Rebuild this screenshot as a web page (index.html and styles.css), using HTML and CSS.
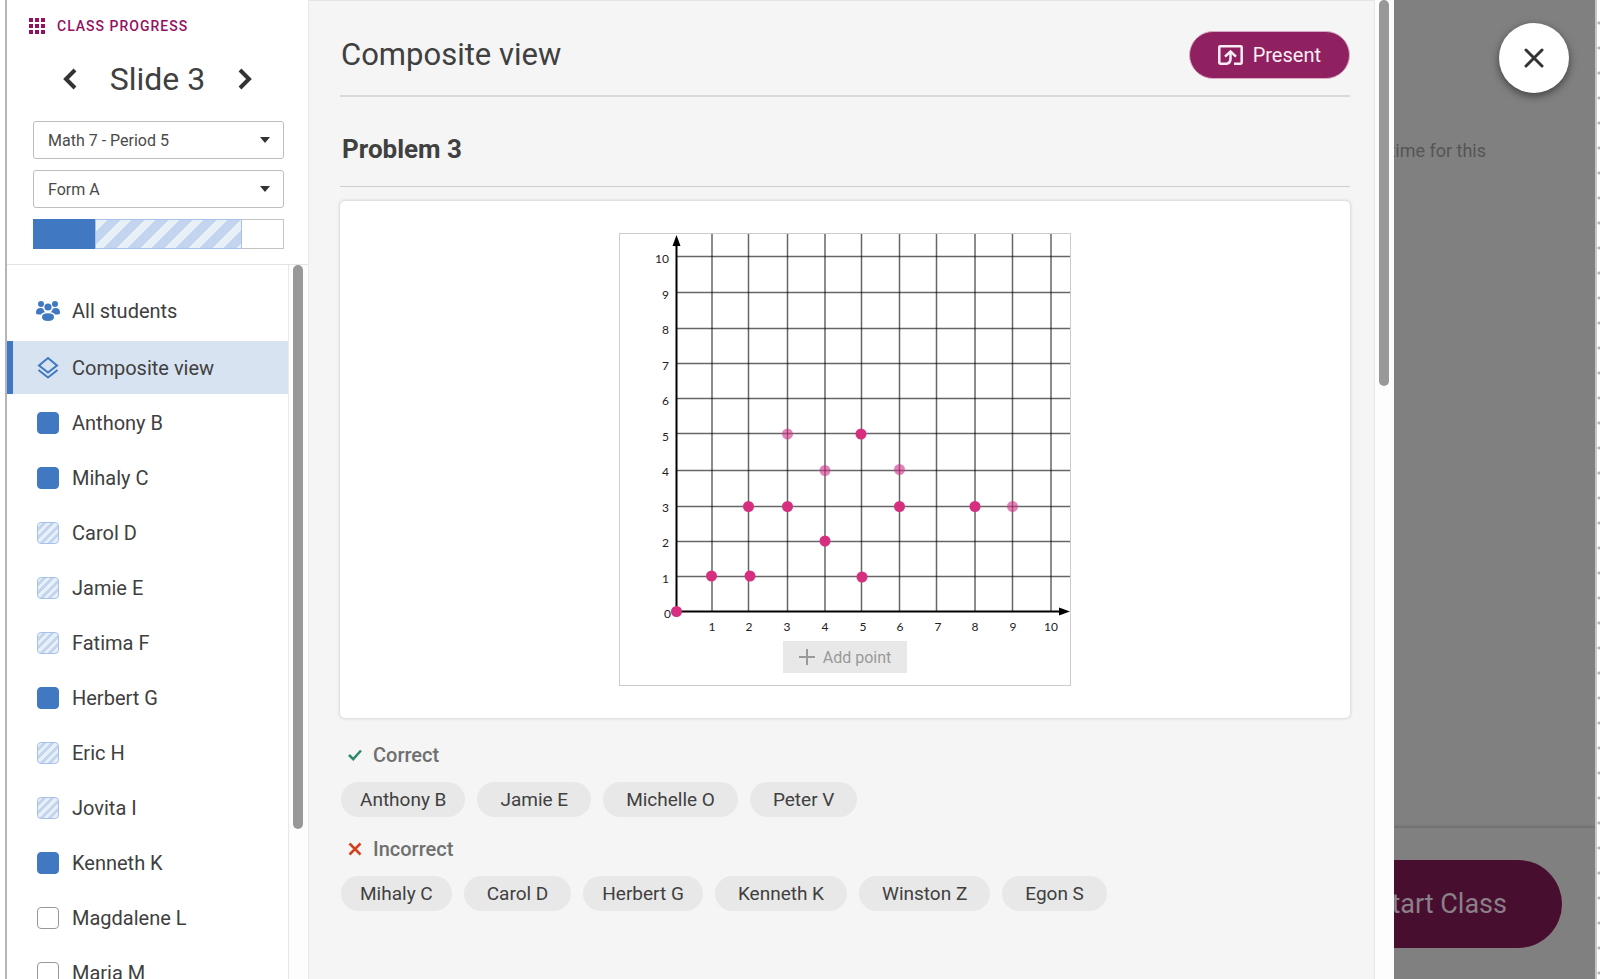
FILE: index.html
```html
<!DOCTYPE html>
<html lang="en">
<head>
<meta charset="utf-8">
<title>Class progress - Slide 3</title>
<link rel="stylesheet" href="styles.css">
</head>
<body>
<div class="app">
  <aside class="sidebar">
    <div class="sidebar-head">
      <a class="progress-link" href="#progress">
        <svg width="16" height="16" viewBox="0 0 16 16" fill="currentColor" aria-hidden="true">
          <path d="M0 0h4v4H0zM6 0h4v4H6zM12 0h4v4h-4zM0 6h4v4H0zM6 6h4v4H6zM12 6h4v4h-4zM0 12h4v4H0zM6 12h4v4H6zM12 12h4v4h-4z"/>
        </svg>
        <span>CLASS PROGRESS</span>
      </a>
      <div class="slide-nav">
        <button class="nav-btn" type="button" aria-label="Previous slide">
          <svg width="14" height="22" viewBox="0 0 14 22" fill="none" stroke="currentColor" stroke-width="4"><path d="M12 2L3 11l9 9"/></svg>
        </button>
        <h2 class="slide-title">Slide 3</h2>
        <button class="nav-btn" type="button" aria-label="Next slide">
          <svg width="14" height="22" viewBox="0 0 14 22" fill="none" stroke="currentColor" stroke-width="4"><path d="M2 2l9 9-9 9"/></svg>
        </button>
      </div>
      <div class="picker"><select aria-label="Class"><option>Math 7 - Period 5</option></select></div>
      <div class="picker"><select aria-label="Form"><option>Form A</option></select></div>
      <div class="meter">
        <div class="meter-done"></div>
        <div class="meter-partial stripes-wide"></div>
      </div>
    </div>
    <div class="sidebar-body">
      <nav class="students" aria-label="Students">
        <a class="student" href="#all">
          <svg class="glyph" width="24" height="22" viewBox="0 0 24 22" fill="#4178c2" aria-hidden="true">
            <circle cx="5" cy="4" r="3"/><circle cx="19" cy="4" r="3"/><circle cx="12" cy="7" r="3.6"/>
            <path d="M0 12.500c0-3 1.500-4.500 4-4.500 1.300 0 2.500.200 3.300.800.200 1.600 1 2.700 2 3.400-2 .200-3.600 1-4.300 2.300H2c-1.500 0-2-.700-2-2z"/>
            <path d="M24 12.500c0-3-1.500-4.500-4-4.500-1.300 0-2.500.200-3.300.800-.200 1.600-1 2.700-2 3.400 2 .200 3.600 1 4.300 2.300h3c1.500 0 2-.700 2-2z"/>
            <path d="M6 17c0-2.700 2-3.800 6-3.800s6 1.100 6 3.800c0 2.600-2 4-6 4s-6-1.400-6-4z"/>
          </svg>
          <span>All students</span>
        </a>
        <a class="student student-active" href="#composite" aria-current="page">
          <svg class="glyph" width="24" height="24" viewBox="0 0 24 24" fill="none" stroke="#4178c2" stroke-width="2" aria-hidden="true">
            <path d="M12 2l9 7.500-9 7-9-7z"/><path d="M2.500 14l9.500 7.500L21.500 14"/>
          </svg>
          <span>Composite view</span>
        </a>
        <a class="student" href="#s1"><i class="swatch done"></i><span>Anthony B</span></a>
        <a class="student" href="#s2"><i class="swatch done"></i><span>Mihaly C</span></a>
        <a class="student" href="#s3"><i class="swatch partial"></i><span>Carol D</span></a>
        <a class="student" href="#s4"><i class="swatch partial"></i><span>Jamie E</span></a>
        <a class="student" href="#s5"><i class="swatch partial"></i><span>Fatima F</span></a>
        <a class="student" href="#s6"><i class="swatch done"></i><span>Herbert G</span></a>
        <a class="student" href="#s7"><i class="swatch partial"></i><span>Eric H</span></a>
        <a class="student" href="#s8"><i class="swatch partial"></i><span>Jovita I</span></a>
        <a class="student" href="#s9"><i class="swatch done"></i><span>Kenneth K</span></a>
        <a class="student" href="#s10"><i class="swatch"></i><span>Magdalene L</span></a>
        <a class="student" href="#s11"><i class="swatch"></i><span>Maria M</span></a>
      </nav>
      <div class="track"><div class="thumb thumb-list"></div></div>
    </div>
  </aside>

  <main class="content">
    <header class="content-head">
      <h1>Composite view</h1>
      <button class="present" type="button">
        <svg width="25" height="20" viewBox="0 0 25 20" fill="none" stroke="currentColor" stroke-width="2.500" aria-hidden="true">
          <path d="M9 18.700H2.200a.9.900 0 0 1-.9-.9V2.200a.9.900 0 0 1 .9-.9h20.600a.9.900 0 0 1 .9.900v15.600a.9.900 0 0 1-.9.900H16"/>
          <path d="M9 18.700c2.500-.5 3.500-2.200 3.500-4.700V7"/><path d="M7 11.700l5.500-5.200 5.500 5.200"/>
        </svg>
        <span>Present</span>
      </button>
    </header>
    <h2 class="problem">Problem 3</h2>

    <section class="card">
      <div class="graph">
        <svg class="plot" viewBox="0 0 450 396" role="img" aria-label="Composite plot of student points">
          <g stroke="#000" stroke-opacity=".6" stroke-width="1.500">
            <path d="M92 0V378M128.500 0V378M167.500 0V378M205 0V378M241.500 0V378M279.500 0V378M316.500 0V378M355 0V378M392.500 0V378M431 0V378"/>
            <path d="M56 22.500H450M56 58.500H450M56 94.500H450M56 129.500H450M56 164.500H450M56 199.500H450M56 236.500H450M56 272.500H450M56 307.500H450M56 342.500H450"/>
          </g>
          <path d="M56.500 8V377.500H442" fill="none" stroke="#000" stroke-width="2"/>
          <path d="M56.500 1l4 11h-8zM450 377.500l-11-4v8z"/>
          <g class="tick tick-y">
            <text x="49" y="29">10</text><text x="49" y="65">9</text><text x="49" y="100">8</text><text x="49" y="136">7</text><text x="49" y="171">6</text><text x="49" y="207">5</text><text x="49" y="242">4</text><text x="49" y="278">3</text><text x="49" y="313">2</text><text x="49" y="349">1</text><text x="51" y="384">0</text>
          </g>
          <g class="tick tick-x">
            <text x="92" y="397">1</text><text x="129" y="397">2</text><text x="167" y="397">3</text><text x="205" y="397">4</text><text x="243" y="397">5</text><text x="280" y="397">6</text><text x="318" y="397">7</text><text x="355" y="397">8</text><text x="393" y="397">9</text><text x="431" y="397">10</text>
          </g>
          <g fill="#d62f7f">
            <circle cx="56.500" cy="377.500" r="5.500"/><circle cx="91.500" cy="342" r="5.500"/><circle cx="130" cy="342" r="5.500"/><circle cx="242" cy="343" r="5.500"/><circle cx="205" cy="307" r="5.500"/><circle cx="128.500" cy="272.500" r="5.500"/><circle cx="167.500" cy="272.500" r="5.500"/><circle cx="279.500" cy="272.500" r="5.500"/><circle cx="355" cy="272.500" r="5.500"/><circle cx="241" cy="200" r="5.500"/>
          </g>
          <g fill="#d13288" fill-opacity=".6">
            <circle cx="167.500" cy="200" r="5.500"/><circle cx="205" cy="236.500" r="5.500"/><circle cx="279.500" cy="235.500" r="5.500"/><circle cx="392.500" cy="272.500" r="5.500"/>
          </g>
        </svg>
        <button class="add-point" type="button" disabled>
          <svg width="16" height="16" viewBox="0 0 16 16" fill="none" stroke="currentColor" stroke-width="2" aria-hidden="true"><path d="M8 0v16M0 8h16"/></svg>
          <span>Add point</span>
        </button>
      </div>
    </section>

    <section class="result">
      <h3>
        <svg width="14" height="14" viewBox="0 0 14 14" fill="none" stroke="#2f8a68" stroke-width="2.500" aria-hidden="true"><path d="M1 7l4.200 4.200L13 2.500"/></svg>
        <span>Correct</span>
      </h3>
      <ul class="chips">
        <li class="chip chip-snug">Anthony B</li><li class="chip">Jamie E</li><li class="chip">Michelle O</li><li class="chip">Peter V</li>
      </ul>
    </section>
    <section class="result">
      <h3>
        <svg width="14" height="14" viewBox="0 0 14 14" fill="none" stroke="#d5401c" stroke-width="2.500" aria-hidden="true"><path d="M1.500 1.500l11 11M12.500 1.500l-11 11"/></svg>
        <span>Incorrect</span>
      </h3>
      <ul class="chips">
        <li class="chip chip-snug">Mihaly C</li><li class="chip">Carol D</li><li class="chip chip-snug">Herbert G</li><li class="chip">Kenneth K</li><li class="chip">Winston Z</li><li class="chip">Egon S</li>
      </ul>
    </section>
  </main>
  <div class="track track-main"><div class="thumb thumb-main"></div></div>

  <div class="backdrop">
    <button class="close" type="button" aria-label="Close">
      <svg width="20" height="20" viewBox="0 0 20 20" fill="none" stroke="#333" stroke-width="3" stroke-linecap="round"><path d="M2 2l16 16M18 2L2 18"/></svg>
    </button>
    <p class="note">time for this</p>
    <div class="backdrop-foot">
      <button class="start" type="button" tabindex="-1">Start Class</button>
    </div>
  </div>
</div>
</body>
</html>
```
FILE: styles.css
```css
* { box-sizing: border-box; }

body {
  margin: 0;
  background: #fff;
  color: #404040;
  font-family: Roboto, "Liberation Sans", sans-serif;
}

h1, h2, h3, p, ul { margin: 0; padding: 0; font-weight: 400; }
button { border: 0; padding: 0; background: none; font: inherit; color: inherit; }
a { color: inherit; text-decoration: none; }
svg { display: block; flex: none; }

.app {
  display: flex;
  height: 100vh;
  overflow: hidden;
  padding: 0 3px 0 5px;
  /* dotted canvas showing at the right edge */
  background: radial-gradient(circle at 2px 2px, #b9b3b6 1px, transparent 2px) right 21px / 3px 25px repeat-y;
}

/* Sidebar */
.sidebar {
  display: flex;
  flex-direction: column;
  flex: none;
  width: 304px;
  border-left: 2px solid #b8b4b7;
  border-right: 1px solid #e8e8e8;
  background: #fff;
}
.sidebar-head {
  display: flex;
  flex-direction: column;
  gap: 11px;
  padding: 16px 24px 15px 26px;
  border-bottom: 1px solid #e3e3e3;
}
.progress-link {
  display: flex;
  align-items: center;
  gap: 12px;
  margin-left: -4px;
  color: #93125f;
  font-size: 14px;
  font-weight: 500;
  line-height: 20px;
  letter-spacing: 1px;
}
.slide-nav {
  display: flex;
  align-items: center;
  justify-content: space-between;
  height: 63px;
  padding: 0 32px 0 30px;
}
.nav-btn { color: #333; }
.slide-title { font-size: 32px; line-height: 40px; }
.picker { position: relative; height: 38px; }
.picker select {
  appearance: none;
  width: 100%;
  height: 100%;
  padding: 0 32px 0 14px;
  border: 1px solid #bdbdbd;
  border-radius: 3px;
  background: #fff;
  color: #4a4a4a;
  font: 16px Roboto, "Liberation Sans", sans-serif;
}
.picker::after {
  content: "";
  position: absolute;
  top: 16px;
  right: 14px;
  border: 5px solid transparent;
  border-top: 6px solid #333;
  border-bottom: 0;
}
.meter {
  display: flex;
  height: 30px;
  border: 1px solid #c4c4c4;
}
.meter-done { width: 25%; margin: -1px 0 -1px -1px; background: #4178c2; }
.meter-partial { width: 59%; margin: -1px 0; border: 1px solid #a6c2ea; }
.stripes-wide { background: repeating-linear-gradient(135deg, #e7eff7 0 8px, #c3d4ef 8px 17px); }

.sidebar-body { display: flex; flex: 1; min-height: 0; }
.students {
  flex: 1;
  padding-top: 19px;
  overflow: hidden;
}
.student {
  display: flex;
  align-items: center;
  height: 53px;
  margin-bottom: 2px;
  padding-left: 30px;
  font-size: 20px;
  line-height: 24px;
}
.student span { margin-left: 13px; }
.student:first-child { margin-bottom: 4px; }
.glyph { margin: 0 -1px; }
.student-active {
  padding-left: 24px;
  border-left: 6px solid #4178c2;
  background: #d8e3f1;
}
.swatch {
  width: 22px;
  height: 22px;
  border: 1px solid #999;
  border-radius: 4px;
}
.swatch.done { border-color: #4178c2; background: #4178c2; }
.swatch.partial {
  border-color: #a6c2ea;
  background: repeating-linear-gradient(135deg, #e7eff7 0 3px, #c3d4ef 3px 6px);
}

/* Scrollbars */
.track {
  flex: none;
  width: 20px;
  padding: 0 5px 0 4px;
  border-left: 1px solid #e8e8e8;
  background: #fdfdfd;
}
.thumb { border-radius: 5px; background: #989898; }
.thumb-list { height: 79%; }
.thumb-main { height: 386px; }

/* Main panel */
.content {
  flex: 1;
  min-width: 0;
  padding: 0 24px 0 31px;
  border-top: 1px solid #e5e5e5;
  background: #f5f5f5;
}
.content-head {
  display: flex;
  align-items: center;
  justify-content: space-between;
  height: 96px;
  padding: 13px 0 0 1px;
  border-bottom: 2px solid #d9d9d9;
}
h1 { font-size: 31px; line-height: 40px; }
.present {
  display: flex;
  align-items: center;
  gap: 10px;
  height: 48px;
  padding: 0 28px;
  border: 1px solid #d9a9c5;
  border-radius: 24px;
  background: #8f2161;
  color: #fbeef6;
  font-size: 20px;
}
.problem {
  padding: 35px 2px 20px;
  border-bottom: 1px solid #cfcfcf;
  font-size: 26px;
  font-weight: 700;
  line-height: 34px;
}
.card {
  display: flex;
  justify-content: center;
  margin-top: 14px;
  padding: 32px;
  border-radius: 5px;
  background: #fff;
  box-shadow: 0 0 3px 1px #d6d6d6;
}
.graph {
  display: flex;
  flex-direction: column;
  align-items: center;
  gap: 11px;
  width: 452px;
  padding-bottom: 12px;
  border: 1px solid #ccc;
}
.plot { width: 100%; overflow: visible; }
.tick { font: 12px Lato, sans-serif; fill: #222; }
.tick-y { text-anchor: end; }
.tick-x { text-anchor: middle; }
.add-point {
  display: flex;
  align-items: center;
  gap: 8px;
  height: 32px;
  padding: 0 16px;
  background: #e8e8e8;
  color: #999;
  font-size: 16px;
}

.result { margin-top: 25px; }
.result + .result { margin-top: 20px; }
.result h3 {
  display: flex;
  align-items: center;
  gap: 11px;
  padding-left: 8px;
  color: #6f6f6f;
  font-size: 20px;
  font-weight: 500;
  line-height: 24px;
}
.chips {
  display: flex;
  flex-wrap: wrap;
  gap: 12px;
  margin-top: 15px;
  padding-left: 1px;
  list-style: none;
}
.chip {
  padding: 0 23px;
  border-radius: 18px;
  background: #e8e8e8;
  font-size: 19px;
  line-height: 35px;
}
.chip-snug { padding: 0 19px; }

/* Dimmed page behind the panel */
.backdrop {
  display: flex;
  flex-direction: column;
  align-items: flex-end;
  flex: none;
  width: 203px;
  overflow: hidden;
  border-right: 2px solid #c9c5c8;
  background: #808080;
}
.close {
  display: flex;
  align-items: center;
  justify-content: center;
  flex: none;
  width: 70px;
  height: 70px;
  margin: 23px 26px 0 0;
  border-radius: 50%;
  background: #fff;
  box-shadow: 0 3px 8px rgba(0, 0, 0, .5);
}
.note {
  margin: 45px 109px 0 0;
  color: #555;
  font-size: 18px;
  line-height: 26px;
  white-space: nowrap;
}
.backdrop-foot {
  display: flex;
  justify-content: flex-end;
  width: 100%;
  margin-top: auto;
  padding: 32px 33px 31px 0;
  box-shadow: 0 0 3px 1px #666;
}
.start {
  flex: none;
  height: 88px;
  padding: 0 55px;
  border-radius: 44px;
  background: #470e2f;
  color: #8a8087;
  font-size: 27px;
  white-space: nowrap;
}
```
